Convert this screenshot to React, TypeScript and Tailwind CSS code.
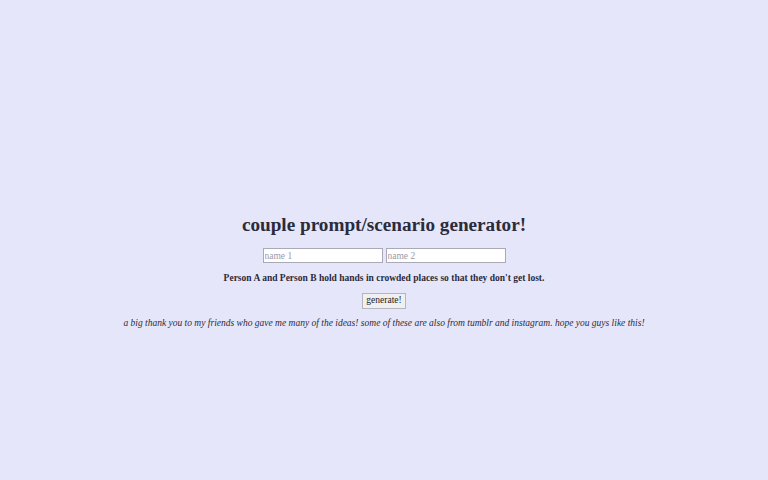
import React, { useState } from 'react';

const prompts = [
  "Person A and Person B hold hands in crowded places so that they don't get lost.",
];

export default function App() {
  const [nameA, setNameA] = useState('');
  const [nameB, setNameB] = useState('');
  const [prompt] = useState(prompts[0]);

  return (
    <div className="min-h-screen bg-[#e6e6fa] text-[#2b2b3b] font-['Liberation_Serif',serif] flex flex-col items-center pt-[213px]">
      <h1 className="text-[19.2px] font-bold leading-6">couple prompt/scenario generator!</h1>
      <div className="mt-[11px] flex gap-[3px]">
        <input
          value={nameA}
          onChange={(e) => setNameA(e.target.value)}
          placeholder="name 1"
          className="w-[120px] h-[15px] bg-white border border-[#a9a9b8] px-[1px] text-[9.5px] leading-none placeholder:text-[#9a9aa6] outline-none"
        />
        <input
          value={nameB}
          onChange={(e) => setNameB(e.target.value)}
          placeholder="name 2"
          className="w-[120px] h-[15px] bg-white border border-[#a9a9b8] px-[1px] text-[9.5px] leading-none placeholder:text-[#9a9aa6] outline-none"
        />
      </div>
      <p className="mt-[8.5px] text-[9.5px] font-bold leading-3">{prompt}</p>
      <button className="mt-[9px] h-[16px] px-[3px] bg-[#f0f0f0] border border-[#b5b5c0] text-[9.5px] leading-none text-[#222]">
        generate!
      </button>
      <p className="mt-[8px] text-[9.5px] italic leading-3">
        a big thank you to my friends who gave me many of the ideas! some of these are also from tumblr and instagram. hope you guys like this!
      </p>
    </div>
  );
}
